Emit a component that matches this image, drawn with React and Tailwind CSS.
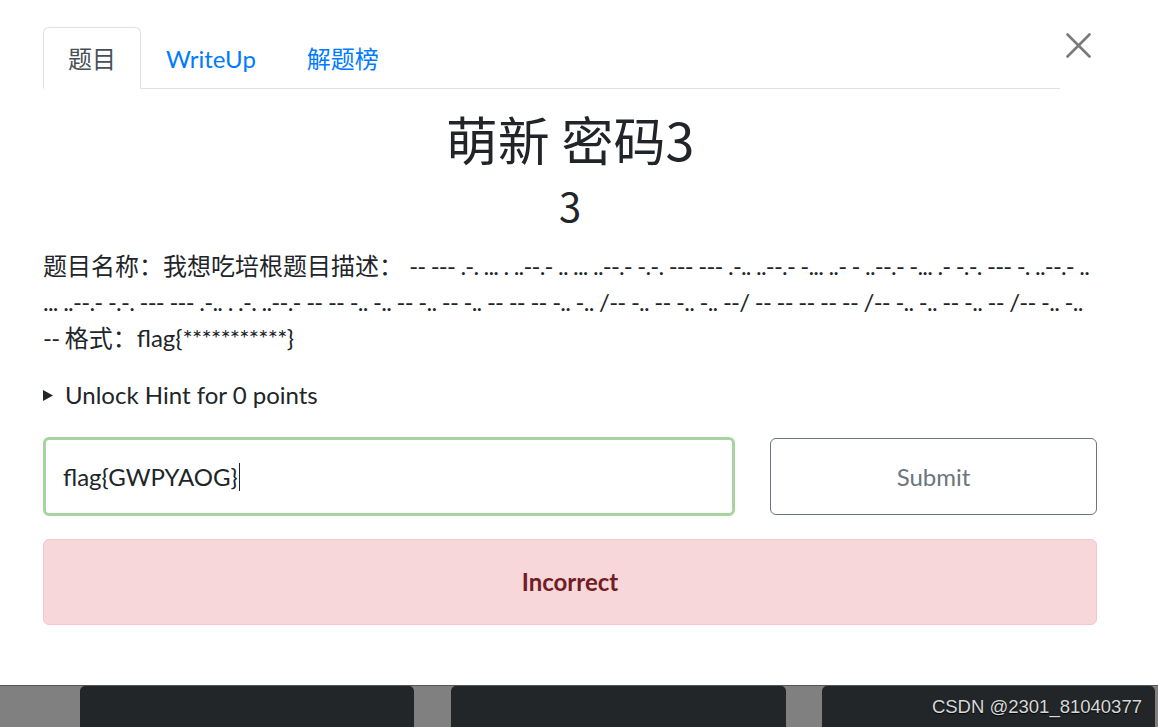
import React from "react";

const body = { fontFamily: "Lato, 'Noto Sans CJK SC', sans-serif" };
const morse = "tracking-[-0.74px]";

const line1 =
  "-- --- .-. ... . ..--.- .. ... ..--.- -.-. --- --- .-.. ..--.- -... ..- - ..--.- -... .- -.-. --- -. ..--.- ..";
const line2 =
  "... ..--.- -.-. --- --- .-.. . .-. ..--.- -- -- -.. -.. -- -.. -- -.. -- -- -- -.. -.. /-- -.. -- -.. -.. --/ -- -- -- -- -- /-- -.. -.. -- -.. -- /-- -.. -..";

export default function App() {
  return (
    <div className="w-[1158px] h-[727px] overflow-hidden bg-white flex flex-col" style={body}>
      <div className="h-[685px] pl-[43px] pr-[61px] pt-[27px] text-[#212529] text-[24px] leading-[36px]">
        {/* tabs + close */}
        <div className="flex">
          <ul className="flex flex-1 border-b border-[#dee2e6]">
            <li className="-mb-px px-6 pt-[13px] pb-[11px] border border-[#dee2e6] border-b-white rounded-t-[6px] bg-white text-[#495057]">
              题目
            </li>
            <li className="-mb-px px-6 pt-[13px] pb-[11px] border border-transparent text-[#007bff]">WriteUp</li>
            <li className="-mb-px pl-[25px] pr-6 pt-[13px] pb-[11px] border border-transparent text-[#007bff]">解题榜</li>
          </ul>
          <div className="w-[37px] flex pl-[6px] pt-[6px]">
            <svg width="25" height="25" viewBox="0 0 25 25">
              <path d="M1.5 1.5 L23.5 23.5 M23.5 1.5 L1.5 23.5" stroke="#7a7a7a" strokeWidth="2.6" strokeLinecap="round" />
            </svg>
          </div>
        </div>

        {/* title */}
        <h3
          className="mt-[19px] text-center text-[52px] leading-[62px] text-[#212529]"
          style={{ fontFamily: "'Noto Sans CJK SC', Roboto, sans-serif" }}
        >
          萌新 密码3
        </h3>
        <h4
          className="mt-[11px] text-center text-[40px] leading-[48px] text-[#212529]"
          style={{ fontFamily: "'Noto Sans CJK SC', Roboto, sans-serif" }}
        >
          3
        </h4>

        {/* description */}
        <div className="mt-[19px] whitespace-nowrap">
          <div>
            题目名称：我想吃培根题目描述： <span className="tracking-[-0.8px]">{line1}</span>
          </div>
          <div className={morse}>{line2}</div>
          <div>
            <span className={morse}>-- </span>格式：flag{"{"}
            <span className={morse}>***********</span>
            {"}"}
          </div>
        </div>

        {/* hint */}
        <div className="mt-[21px] flex items-center gap-[12px]">
          <svg width="10" height="11" viewBox="0 0 10 11">
            <path d="M0 0 L10 5.5 L0 11 Z" fill="#212529" />
          </svg>
          <span>Unlock Hint for 0 points</span>
        </div>

        {/* answer row */}
        <div className="mt-[24px] flex items-center gap-[35px]">
          <div className="w-[692px] h-[79px] border-[3px] border-[#a6d4a0] rounded-[6px] flex items-center px-[17px] text-[#212529]">
            flag{"{"}GWPYAOG{"}"}
            <span className="ml-[1px] w-px h-[28px] bg-[#212529]" />
          </div>
          <button className="flex-1 h-[77px] border border-[#6c757d] rounded-[6px] text-[#6c757d] bg-white">
            Submit
          </button>
        </div>

        {/* alert */}
        <div className="mt-[23px] h-[86px] rounded-[6px] border border-[#f5c6cb] bg-[#f8d7da] flex items-center justify-center font-bold text-[#721c24]">
          Incorrect
        </div>
      </div>

      {/* background page strip */}
      <div className="flex-1 border-t border-[#555] bg-[#808080] flex items-end">
        <div className="ml-[80px] w-[334px] h-[41px] rounded-t-[5px] bg-[#232629]" />
        <div className="ml-[37px] w-[335px] h-[41px] rounded-t-[5px] bg-[#232629]" />
        <div
          className="ml-[36px] w-[333px] h-[41px] rounded-t-[5px] bg-[#232629] flex items-center justify-end pr-[13px] text-[18.5px] text-[#d8d8d8] [text-shadow:0_1px_1px_#000]"
          style={{ fontFamily: "'Liberation Sans', Arial, sans-serif" }}
        >
          CSDN @2301_81040377
        </div>
      </div>
    </div>
  );
}
